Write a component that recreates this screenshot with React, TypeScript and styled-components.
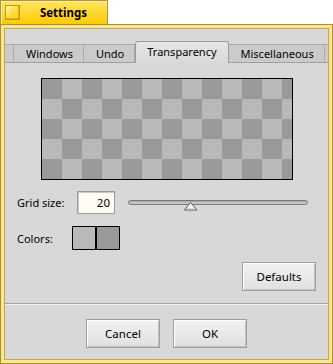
import React from 'react';
import styled, { createGlobalStyle } from 'styled-components';

const GlobalStyle = createGlobalStyle`
  html, body {
    margin: 0;
    padding: 0;
    background: #ffffff;
  }
  body {
    font-family: "Noto Sans", "DejaVu Sans", sans-serif;
    font-size: 11px;
    color: #000;
  }
`;

const Window = styled.div`
  width: 333px;
  height: 364px;
  display: flex;
  flex-direction: column;
`;

const TitleTab = styled.div`
  width: 108px;
  height: 24px;
  box-sizing: border-box;
  display: flex;
  align-items: center;
  padding-left: 4px;
  background: linear-gradient(#ffe466, #ffcb00);
  border: 1px solid #b39532;
  border-bottom: none;
  box-shadow: inset 1px 1px 0 #fff2a8;
`;

const CloseBox = styled.div`
  width: 15px;
  height: 15px;
  box-sizing: border-box;
  border: 1px solid #b89a2e;
  background: linear-gradient(135deg, #fff6c4 0%, #ffe04a 45%, #ffcc00 100%);
  box-shadow: inset -1px -1px 0 #e6b800;
`;

const Title = styled.div`
  flex: 1;
  text-align: center;
  font-weight: bold;
  font-size: 11.5px;
`;

const Frame = styled.div`
  flex: 1;
  display: flex;
  flex-direction: column;
  padding: 4px;
  border: 1px solid #a88e40;
  background: #d8d8d8;
  box-shadow: inset 0 0 0 3px #fde689, inset 0 0 0 4px #c4a858;
`;

const TabView = styled.div`
  margin-top: 15px;
  display: flex;
  flex-direction: column;
  border-bottom: 1px solid #a3a3a3;
`;

const TabBar = styled.div`
  display: flex;
  height: 19px;
`;

const TabStub = styled.div<{ $grow?: boolean }>`
  ${(p) => (p.$grow ? 'flex: 1;' : 'width: 9px;')}
  box-sizing: border-box;
  background: #cbcbcb;
  border-top: 1px solid #a8a8a8;
  border-bottom: 1px solid #a0a0a0;
  ${(p) => (p.$grow ? '' : 'border-right: 1px solid #aaaaaa;')}
`;

const Tab = styled.div<{ $active?: boolean }>`
  box-sizing: border-box;
  display: flex;
  align-items: center;
  padding: 0 10px 0 12px;
  background: #cbcbcb;
  border-top: 1px solid #a8a8a8;
  border-bottom: 1px solid #a0a0a0;
  border-right: 1px solid #aaaaaa;
  white-space: nowrap;

  ${(p) =>
    p.$active &&
    `
    margin-top: -3px;
    padding: 0 11px 2px 11px;
    background: linear-gradient(#e6e6e6, #d9d9d9);
    border: 1px solid #9a9a9a;
    border-bottom: none;
    border-radius: 3px 3px 0 0;
  `}
`;

const Panel = styled.div`
  display: flex;
  flex-direction: column;
  padding: 15px 12px 12px;
`;

const Checker = styled.div`
  margin-left: 24px;
  width: 252px;
  height: 102px;
  box-sizing: border-box;
  border: 1px solid #000;
  background: repeating-conic-gradient(#b9b9b9 0 25%, #999999 0 50%) 0 0 / 40px 40px;
`;

const Row = styled.div<{ $gap: number }>`
  display: flex;
  align-items: center;
  margin-top: ${(p) => p.$gap}px;
`;

const Label = styled.div<{ $width: number }>`
  width: ${(p) => p.$width}px;
`;

const Field = styled.input`
  width: 38px;
  height: 23px;
  box-sizing: border-box;
  border: 1px solid #9a9a9a;
  box-shadow: inset 1px 1px 0 #c8c8c8;
  background: #fffcf4;
  font: inherit;
  font-size: 11.5px;
  text-align: right;
  padding: 0 4px 0 0;
  margin: 0;
  outline: none;
`;

const Slider = styled.div`
  position: relative;
  margin-left: 13px;
  width: 180px;
  height: 23px;
  display: flex;
  align-items: center;
`;

const SliderBar = styled.div`
  width: 100%;
  height: 5px;
  box-sizing: border-box;
  border: 1px solid #7a7a7a;
  border-radius: 3px;
  background: #c6c6c6;
  box-shadow: inset 0 1px 0 #a8a8a8;
`;

const Thumb = styled.svg`
  position: absolute;
  left: 56px;
  top: 11px;
`;

const Swatch = styled.div<{ $color: string }>`
  width: 24px;
  height: 24px;
  box-sizing: border-box;
  border: 1px solid #000;
  background: ${(p) => p.$color};
`;

const ButtonRow = styled.div<{ $center?: boolean; $gap?: number }>`
  display: flex;
  justify-content: ${(p) => (p.$center ? 'center' : 'flex-end')};
  gap: 13px;
  margin-top: ${(p) => p.$gap ?? 0}px;
`;

const Footer = styled.div`
  padding-top: 14px;
  border-top: 1px solid #f0f0f0;
`;

const Button = styled.button`
  width: 74px;
  height: 29px;
  box-sizing: border-box;
  margin: 0;
  padding: 0;
  font: inherit;
  font-size: 11.5px;
  color: #000;
  border: 1px solid #9e9e9e;
  background: linear-gradient(#f2f2f2, #e0e0e0);
  box-shadow: inset 1px 1px 0 #ffffff, inset -1px -1px 0 #c4c4c4;
`;

export default function App() {
  return (
    <>
      <GlobalStyle />
      <Window>
        <TitleTab>
          <CloseBox />
          <Title>Settings</Title>
        </TitleTab>
        <Frame>
          <TabView>
            <TabBar>
              <TabStub />
              <Tab>Windows</Tab>
              <Tab>Undo</Tab>
              <Tab $active>Transparency</Tab>
              <Tab>Miscellaneous</Tab>
              <TabStub $grow />
            </TabBar>
            <Panel>
              <Checker />
              <Row $gap={11}>
                <Label $width={60}>Grid size:</Label>
                <Field readOnly value="20" />
                <Slider>
                  <SliderBar />
                  <Thumb width="14" height="9" viewBox="0 0 14 9">
                    <polygon points="6.5,0.5 13,8 0.5,8" fill="#f4f4f4" stroke="#555" strokeWidth="1" />
                    <line x1="2" y1="7" x2="12" y2="7" stroke="#bdbdbd" strokeWidth="1" />
                  </Thumb>
                </Slider>
              </Row>
              <Row $gap={12}>
                <Label $width={55}>Colors:</Label>
                <Swatch $color="#b9b9b9" />
                <Swatch $color="#999999" />
              </Row>
              <ButtonRow $gap={12}>
                <Button>Defaults</Button>
              </ButtonRow>
            </Panel>
          </TabView>
          <Footer>
            <ButtonRow $center>
              <Button>Cancel</Button>
              <Button>OK</Button>
            </ButtonRow>
          </Footer>
        </Frame>
      </Window>
    </>
  );
}
